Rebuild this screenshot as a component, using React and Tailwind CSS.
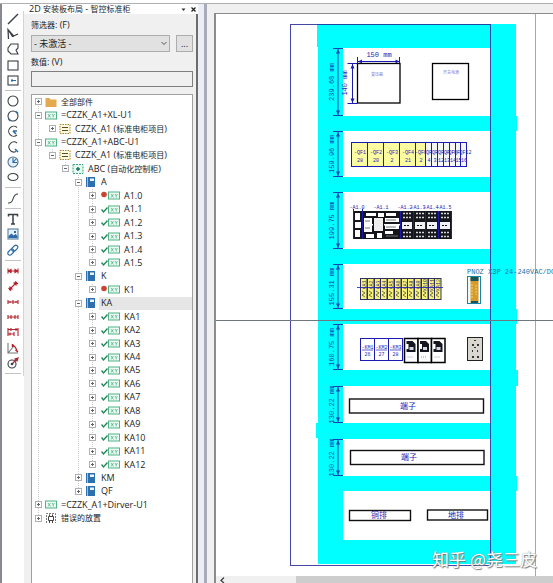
import React from "react";

const SANS = "font-['Open_Sans','Noto_Sans_CJK_SC',sans-serif]";

/* ---------- Toolbar ---------- */

const RED = "#b3242c";
const INK = "#3a3f45";
const BLUE = "#2c6ba8";

const dimEnds = (
  <path d="M2 4.500v5M12 4.500v5M2 7h10M2.500 7l2.500-1.500v3zM11.500 7l-2.500-1.500v3z" fill={RED} stroke={RED} />
);

const TOOL_GROUPS = [
  {
    size: "h-[77px]",
    tools: [
      ["Line", <path d="M2 12L12 2" strokeWidth="1.5" />],
      ["Polyline", <path d="M2.500 12L2 2.500l6 7M2 2.500l4.500 7L12 7" strokeWidth="1.300" />],
      ["Polygon", <path d="M5 2h7v4l-2 2 2 4H5L2 9V6z" />],
      ["Rectangle", <rect x="2" y="3" width="10" height="9" />],
      ["Rectangle via centre", <><rect x="2" y="3" width="10" height="9" /><path d="M5 7.500h5M6 6v3" stroke={BLUE} /></>],
    ],
  },
  {
    size: "h-[92px]",
    tools: [
      ["Circle", <circle cx="7" cy="7" r="5" />],
      ["Circle through three points", <><circle cx="7" cy="7" r="5" /><path d="M10 2.500l2 2M2.500 10l2 2" stroke={BLUE} strokeWidth="1.6" /></>],
      ["Arc via centre", <><path d="M11 3.500A5 5 0 1 0 11 11" /><path d="M7 7h4M7 7l3 3" stroke={BLUE} strokeWidth="1.5" /></>],
      ["Arc through three points", <><path d="M11 3A5 5 0 1 0 10 11.500" /><path d="M9 9l3 3" stroke={BLUE} strokeWidth="1.6" /></>],
      ["Sector", <><circle cx="7" cy="7" r="5" fill="#e6f0f9" stroke="#4a6f94" /><path d="M7 3v4.500h4M7 7.500l3-3.500" stroke={BLUE} /></>],
      ["Ellipse", <ellipse cx="7" cy="7" rx="5" ry="3.500" />],
    ],
  },
  { size: "h-[16px]", tools: [["Spline", <path d="M2 12c7 1 3-9 10-9" />]] },
  {
    size: "h-[47px]",
    tools: [
      ["Text", <path d="M2.500 4.500V2.500h9v2M7 2.500v9.500M5 12h4" strokeWidth="1.5" />],
      ["Image", <><rect x="2" y="2" width="10" height="10" fill="#e4eff8" stroke="#5a7ea3" /><path d="M2.500 11V9l3-2.500 2 2 2-1.500 2 2v2z" fill={BLUE} stroke="none" /><path d="M8 4h2v2H8z" fill={BLUE} stroke="none" /></>],
      ["Hyperlink", <g stroke={BLUE} strokeWidth="1.200" transform="rotate(-45 7 7)"><rect x="0.500" y="5" width="7" height="4" rx="2" /><rect x="6" y="5" width="7" height="4" rx="2" /></g>],
    ],
  },
  {
    size: "h-[108px]",
    tools: [
      ["Linear dimension", dimEnds],
      ["Aligned dimension", <path d="M3.500 10.500l7-7M2.500 9l2.500 3M9 2.500l3 2.500M3.500 10.500l.5-2.500 2 2zM10.500 3.500l-.5 2.500-2-2z" fill={RED} stroke={RED} />],
      ["Continued dimension", <path d="M2 5v4M12 5v4M7 5v4M2 7h10M4 6v2M10 6v2" stroke={RED} />],
      ["Incremental dimension", <path d="M2 5v4M12 5v4M5 5v4M9 5v4M2 7h10" stroke={RED} />],
      ["Baseline dimension", <path d="M2 3v8M12 3v8M2 4.500h10M2 9h6M8 7v4M5 3v3M10 3v3M4 7.500v3" stroke={RED} />],
      ["Angle dimension", <><path d="M2 2v10h10M2 12l6-7" stroke="#777" /><path d="M7 4q3 2 4 6M6.500 3v3M9.500 9l2.500 2" stroke={RED} strokeWidth="1.500" /></>],
      ["Radius dimension", <><circle cx="6" cy="8" r="4" /><path d="M6 8l6-6M9 3l3-1-1 3z" stroke={RED} strokeWidth="1.200" /><circle cx="6" cy="8" r="0.800" fill={INK} /></>],
    ],
  },
];

function Toolbar() {
  return (
    <nav aria-label="Drawing tools" className="flex w-6 shrink-0 flex-col border-l-2 border-[#85888f] bg-white pt-[7px]">
      {TOOL_GROUPS.map((g, i) => (
        <div key={i} className="flex flex-col items-center border-r border-[#d4d4d8]">
          <div className={`grid auto-rows-fr ${g.size}`}>
            {g.tools.map(([name, art]) => (
              <button key={name} type="button" aria-label={name} className="flex min-h-0 items-center justify-center">
                <svg width="14" height="14" viewBox="0 0 14 14" fill="none" stroke={INK} strokeWidth="1.100" className="shrink-0">
                  {art}
                </svg>
              </button>
            ))}
          </div>
          <div className="my-[2px] h-px w-4 bg-[#c4c4c8]" />
        </div>
      ))}
    </nav>
  );
}

/* ---------- Tree ---------- */

const leaf = (t, mark) => [4, "+", mark, t];
const TREE = [
  [0, "+", "folder", "", "全部部件"],
  [0, "-", "xy", "=CZZK_A1+XL-U1"],
  [1, "+", "layout", "CZZK_A1 ", "标准电柜项目"],
  [0, "-", "xy", "=CZZK_A1+ABC-U1"],
  [1, "-", "layout", "CZZK_A1 ", "标准电柜项目"],
  [2, "-", "place", "ABC ", "自动化控制柜"],
  [3, "-", "book", "A"],
  leaf("A1.0", "dot"),
  ...[1, 2, 3, 4, 5].map((n) => leaf(`A1.${n}`, "check")),
  [3, "-", "book", "K"],
  leaf("K1", "dot"),
  [3, "-", "book", "KA"],
  ...[1, 2, 3, 4, 5, 6, 7, 8, 9, 10, 11, 12].map((n) => leaf(`KA${n}`, "check")),
  [3, "+", "book", "KM"],
  [3, "+", "book", "QF"],
  [0, "+", "xy", "=CZZK_A1+Dirver-U1"],
  [0, "+", "wrong", "", "错误的放置"],
];

const INDENT = ["pl-[3px]", "pl-[17px]", "pl-[30px]", "pl-[43px]", "pl-[57px]"];

function XY() {
  return (
    <svg width="12" height="9" viewBox="0 0 12 9" className="shrink-0" fill="none" stroke="#4fb386" aria-hidden="true">
      <rect x="0.500" y="1" width="11" height="7" fill="#edfaf3" />
      <path d="M3 3l2.500 3.500M5.500 3L3 6.500M7 3l1.200 1.700L9.500 3M8.200 4.500v2" strokeWidth="0.800" />
    </svg>
  );
}

const GLYPHS = {
  folder: <path d="M0.500 2h4l1 1.500h6V11h-11z" fill="#e5a950" />,
  layout: (
    <>
      <rect x="1" y="1.500" width="10" height="9" fill="#fffbe0" stroke="#a8842c" strokeDasharray="1.500 1" />
      <path d="M3 4.500h6M3 7.500h6" stroke="#5b4c23" />
    </>
  ),
  place: (
    <>
      <rect x="1" y="1.500" width="10" height="9" fill="#e3faf2" stroke="#3aa583" strokeDasharray="2 1" />
      <path d="M6 4v4M4 6h4" stroke="#1d6d5c" strokeWidth="1.400" />
    </>
  ),
  book: (
    <>
      <rect x="1" y="1" width="9" height="10" fill="#2e6fae" />
      <path d="M2.500 1v10" stroke="#9cc3e6" />
      <rect x="5" y="2.500" width="4" height="2.500" fill="#e9f3fb" />
    </>
  ),
  wrong: (
    <>
      <path d="M1.500 11V1.500h9V11" fill="none" stroke="#777" strokeDasharray="2 1" />
      <path d="M3.500 4.500h5v4h-5zM4.500 2.500v2M7.500 2.500v2M4.500 9v2M7.500 9v2" fill="none" stroke="#444" />
    </>
  ),
};

function RowIcon({ kind }) {
  if (kind === "xy") return <XY />;
  if (kind === "dot" || kind === "check") {
    return (
      <span className="flex items-center pl-[2px]">
        <svg width="7" height="9" viewBox="0 0 7 9" className="shrink-0" aria-hidden="true">
          {kind === "dot" ? (
            <circle cx="3" cy="3.500" r="2.800" fill="#cb4433" />
          ) : (
            <path d="M0.500 4.500L2.500 7 6.500 2.500" fill="none" stroke="#23865b" strokeWidth="1.400" />
          )}
        </svg>
        <XY />
      </span>
    );
  }
  return (
    <svg width="12" height="12" viewBox="0 0 12 12" className="shrink-0" aria-hidden="true">
      {GLYPHS[kind]}
    </svg>
  );
}

function TreeRow({ row }) {
  const [level, state, kind, latin, cjk] = row;
  const selected = latin === "KA";
  return (
    <li role="treeitem" aria-selected={selected} aria-level={level + 1} className={`flex min-h-0 items-center whitespace-nowrap ${INDENT[level]}`}>
      <button type="button" aria-label={state === "+" ? "Expand" : "Collapse"} className="mr-[3px] shrink-0">
        <svg width="7" height="7" viewBox="0 0 7 7" className="block">
          <rect x="0.500" y="0.500" width="6" height="6" fill="#fff" stroke="#b0b0b0" />
          <path d={state === "+" ? "M2 3.500h3M3.500 2v3" : "M2 3.500h3"} stroke="#5f6670" />
        </svg>
      </button>
      <RowIcon kind={kind} />
      <span className={`ml-[2px] flex h-full items-center whitespace-pre pl-[2px] text-[9px] leading-3 ${selected ? "flex-1 bg-[#e6e6e6]" : ""}`}>
        {latin}
        {cjk && latin && "("}
        {cjk && <span className="text-[8px]">{cjk}</span>}
        {cjk && latin && ")"}
      </span>
    </li>
  );
}

function Tree() {
  return (
    <div className="relative mr-[3px] min-h-0 flex-1 overflow-hidden border border-b-0 border-[#a0a0a0] bg-white">
      <svg className="absolute left-0 top-0" width="70" height="430" fill="none" stroke="#c9c9c9" strokeDasharray="1 1" aria-hidden="true">
        <path d="M6.500 7v416M20.500 54v8M33.500 67v8M46.500 80v314M60.500 94v74M60.500 189v6M60.500 215v154" />
      </svg>
      <ul role="tree" aria-label="安装板布局" className="relative grid h-[430px] auto-rows-fr">
        {TREE.map((row, i) => (
          <TreeRow key={i} row={row} />
        ))}
      </ul>
    </div>
  );
}

function Navigator() {
  return (
    <section className="flex w-[174px] shrink-0 flex-col border-r-2 border-[#6d6d6d] bg-[#f0f0f0] text-[9px] leading-3 text-[#1c1c1c]">
      <header className="-mr-[2px] flex h-[10px] shrink-0 items-center bg-white pl-[5px]">
        <h1 className="flex-1 whitespace-nowrap">
          2D <span className="text-[8px]">安装板布局</span> - <span className="text-[8px]">智控标准柜</span>
        </h1>
        <button type="button" aria-label="Menu" className="mr-[5px]">
          <svg width="5" height="5" viewBox="0 0 5 5"><path d="M0.500 1.500h4L2.500 4z" fill="#333" /></svg>
        </button>
        <button type="button" aria-label="Close" className="mr-[2px]">
          <svg width="5" height="5" viewBox="0 0 5 5"><path d="M0.500 0.500l4 4M4.500 0.500l-4 4" stroke="#222" strokeWidth="1.300" /></svg>
        </button>
      </header>
      <div className="flex min-h-0 flex-1 flex-col pl-[7px] pt-[5px]">
        <label htmlFor="filter"><span className="text-[8px]">筛选器</span>: (F)</label>
        <div className="mr-[3px] mt-1 flex gap-[6px]">
          <div className="relative flex-1">
            <select id="filter" className="h-[17px] w-full appearance-none border border-[#adadad] bg-[#e1e1e1] pl-[2px] text-[9px] leading-3">
              <option>- 未激活 -</option>
            </select>
            <svg className="pointer-events-none absolute right-[3px] top-[6px]" width="6" height="5" viewBox="0 0 6 5" fill="none" stroke="#555"><path d="M0.500 1L3 3.500 5.500 1" /></svg>
          </div>
          <button type="button" className="h-[17px] w-[17px] border border-[#adadad] bg-[#e1e1e1] leading-3">...</button>
        </div>
        <label htmlFor="value" className="mt-1"><span className="text-[8px]">数值</span>: (V)</label>
        <input id="value" className="mb-[7px] mr-[3px] mt-[3px] h-[16px] shrink-0 border border-[#7f7f7f] bg-[#f0f0f0] px-1" />
        <Tree />
      </div>
    </section>
  );
}

/* ---------- Mounting panel drawing ---------- */

const NAVY = "#1b1bb4";
const SLOTS = [
  [48, 116, "239.68 mm"],
  [131, 177, "159.96 mm"],
  [192, 249, "199.75 mm"],
  [264, 309, "155.31 mm"],
  [324, 370, "160.75 mm"],
  [386, 423, "130.22 mm"],
  [439, 476, "130.22 mm"],
  [491, 540, null],
];

function Label({ x, y, size = 7, fill = NAVY, anchor = "middle", turn = false, children }) {
  return (
    <text
      x={x}
      y={y}
      fontSize={size}
      fill={fill}
      textAnchor={anchor}
      transform={turn ? `rotate(-90 ${x} ${y})` : undefined}
      className="font-['Liberation_Mono','Noto_Sans_CJK_SC',monospace]"
    >
      {children}
    </text>
  );
}

function VDim({ x, y1, y2, color }) {
  return (
    <g stroke={color} fill={color}>
      <path d={`M${x} ${y1}V${y2}M${x - 5} ${y1 + 0.5}h10M${x - 5} ${y2 - 0.5}h10`} fill="none" />
      <path d={`M${x} ${y1 + 1}l-2 4.500h4zM${x} ${y2 - 1}l-2-4.500h4z`} stroke="none" />
    </g>
  );
}

const QF_EDGES = [351, 367, 383, 399, 415, 425, 431, 437, 443, 449, 455, 460, 466];
const QF_NUMBERS = ["28", "20", "2", "21", "2", "4", "3", "12", "13", "14", "15", "16"];

function Breakers() {
  return (
    <g>
      {QF_NUMBERS.map((n, i) => {
        const x = QF_EDGES[i];
        const w = QF_EDGES[i + 1] - x;
        return (
          <g key={i}>
            <rect x={x + 0.5} y="142.500" width={w} height="24" fill={i < 5 ? "#fbfba0" : "#f5f5f4"} stroke={NAVY} />
            <Label x={x + w / 2 + 1} y={154} size={5}>{`-QF${i + 1}`}</Label>
            <Label x={x + w / 2 + 1} y={162} size={5}>{n}</Label>
          </g>
        );
      })}
    </g>
  );
}

function Plc() {
  return (
    <g>
      <rect x="353" y="211" width="99" height="28" fill="#15151c" />
      <path d="M355 213h5v7h-5zM355 230h5v7h-5zM355 222h6v6h-6zM366 213h10v3h-10zM378 213h6v5h-6zM386 213h10v3h-10zM364 218h8v14h-8zM385 218h14v4h-14zM385 225h14v4h-14zM366 234h8v4h-8zM385 231h8v3h-8zM377 233h5v5h-5z" fill="#fff" />
      <path d="M364 224h36v1.500h-36z" fill="#fff" />
      <path d="M386 220h10M386 227h10M365 221h5M365 228h5M386 236h12" stroke="#777" />
      <rect x="373.500" y="217.500" width="10" height="14" fill="#eee" stroke="#111" />
      {[402, 415, 427, 440].map((x) => (
        <g key={x}>
          <path d={`M${x} 222h10v7h-10z`} fill="#f2f2f6" />
          <path d={`M${x + 2} 225.500h6`} stroke="#111" strokeDasharray="2 1" />
          <path d={`M${x + 1} 213.500h8M${x + 1} 217.500h8M${x + 1} 232.500h8M${x + 1} 236.500h8`} stroke="#d5d5d5" strokeWidth="1.500" strokeDasharray="2 1" />
          <path d={`M${x - 1.5} 211v28`} stroke={NAVY} />
        </g>
      ))}
      <path d="M353.500 209v30M362.500 209v30M451.500 211v28" stroke={NAVY} />
      {[357, 381, 405, 418, 431, 444].map((x, i) => (
        <Label key={x} x={x} y={209} size={5}>{`-A1.${i}`}</Label>
      ))}
    </g>
  );
}

function Relays() {
  return (
    <g>
      {Array.from({ length: 12 }, (_, i) => {
        const x = 360 + Math.round(i * 6.75);
        return (
          <g key={i}>
            <rect x={x + 0.5} y="278.500" width="6.500" height="21" fill="#f7f27a" stroke="#30305c" />
            <Label x={x + 6} y={285} size={5} turn fill="#30306a">{`KA${i + 1}`}</Label>
            <path d={`M${x + 2} 291l3 2-3 2 3 2`} stroke="#55542a" strokeWidth="0.800" fill="none" />
          </g>
        );
      })}
      <path d="M357 287.500h86" stroke={NAVY} strokeWidth="0.800" />
    </g>
  );
}

function LowerDevices() {
  return (
    <g>
      {[26, 27, 28].map((n, i) => (
        <g key={n}>
          <rect x={360.5 + i * 14} y="338.500" width="14" height="22" fill="#fff" stroke={NAVY} />
          <Label x={367.5 + i * 14} y={349} size={5}>{`-KM${i + 1}`}</Label>
          <path d={`M${362 + i * 14} 350h11`} stroke={NAVY} strokeWidth="0.700" />
          <Label x={367.5 + i * 14} y={356} size={5}>{n}</Label>
        </g>
      ))}
      {[404.5, 418, 431.5].map((x) => (
        <g key={x}>
          <rect x={x} y="338.500" width="13.500" height="24" fill="#fff" stroke="#000" strokeWidth="1.500" />
          <path d={`M${x + 2} 341h6l3 3v8h-9v-3h2v-5h-2z`} fill="#16161e" />
          <rect x={x + 5} y="347" width="4" height="3" fill="#d6d6e4" />
          <path d={`M${x + 3} 357h6`} stroke="#999" strokeDasharray="1 1" />
        </g>
      ))}
      <rect x="467.500" y="337.500" width="15" height="23" fill="#d9d7d0" stroke="#222" />
      <g fill="#333">
        <path d="M474 340h2v1h-2zM472 344h2v2h-2zM477 344h2v2h-2zM474 347h2v1h-2zM472 350h1v2h-1zM477 350h1v2h-1zM472 356h2v2h-2zM477 356h2v2h-2z" />
      </g>
    </g>
  );
}

function PanelDrawing() {
  return (
    <svg width="337" height="562" viewBox="216 14 337 562" className="block max-w-none" role="img" aria-label="安装板">
      <path d="M535.500 14v562" stroke="#a8a8a8" />
      <rect x="318" y="24" width="198" height="540" rx="1" fill="#0ff" />
      <path d="M317 24h60v23h-60zM440 116h77v15h-77zM440 309h77v15h-77zM440 370h78v16h-78zM316 423h60v15h-60zM440 476h77v15h-77z" fill="#0ff" />
      {SLOTS.map(([y1, y2, text], i) => (
        <g key={i}>
          <rect x="343" y={y1} width="148" height={y2 - y1} fill="#fff" />
          {text && <VDim x={338} y1={y1} y2={y2} color="#1245b8" />}
          {text && <Label x={334} y={(y1 + y2) / 2} turn fill="#1245b8">{text}</Label>}
        </g>
      ))}
      <rect x="290.500" y="24.500" width="200" height="541" fill="none" stroke="#26269a" strokeOpacity="0.850" />

      <rect x="357.500" y="63.500" width="42.500" height="39.500" fill="#fff" stroke="#000" strokeWidth="1.300" />
      <Label x={377} y={76} size={4} fill="#7575d6">变压器</Label>
      <path d="M357.500 57v6M399.500 57v6M357 61.500h43" stroke={NAVY} fill="none" />
      <path d="M358 61.500l4-2v4zM399.500 61.500l-4-2v4z" fill={NAVY} />
      <Label x={379} y={57}>150 mm</Label>
      <VDim x={352.5} y1={63} y2={104} color={NAVY} />
      <Label x={347} y={83} turn>140 mm</Label>
      <rect x="432.500" y="63.500" width="36" height="36" fill="#fff" stroke="#000" strokeWidth="1.300" />
      <Label x={451} y={74} size={4} fill="#7575d6">开关电源</Label>

      <Breakers />
      <Plc />
      <Relays />

      <rect x="467.500" y="276.500" width="13" height="27" fill="#eefaff" stroke="#1784a8" />
      <rect x="470.500" y="277" width="8" height="26" fill="#d59b2d" />
      <path d="M470.500 277h8v4h-8zM471 301h7v2h-7z" fill="#1d545c" />
      <path d="M472 284v14M476 285v10" stroke="#f4d37a" strokeDasharray="2 1" />
      <Label x={467} y={274} anchor="start" fill="#1570a4">PNOZ X3P 24-240VAC/DC</Label>

      <LowerDevices />
      <path d="M216 320.500h337" stroke="#6f7780" />

      <g fill="#fff" stroke="#111" strokeWidth="1.400">
        <rect x="349.500" y="399" width="134" height="14" />
        <rect x="350.500" y="450.500" width="133.500" height="14" />
        <rect x="349.500" y="510.500" width="61" height="10" />
        <rect x="427.500" y="510" width="60" height="10" />
      </g>
      <Label x={408} y={409} size={8}>端子</Label>
      <Label x={409} y={460} size={8}>端子</Label>
      <Label x={379} y={518} size={8}>铜排</Label>
      <Label x={456} y={518} size={8}>地排</Label>
    </svg>
  );
}

function Workspace() {
  return (
    <main className="flex min-w-0 flex-1 flex-col border-l-[3px] border-[#a9abb8] bg-[#f0f0f0] pl-[7px] pt-[9px]">
      <div className="relative min-h-0 flex-1 overflow-hidden border-l-2 border-t border-[#8c8c8c] bg-white">
        <PanelDrawing />
        <p className="absolute bottom-[5px] right-4 whitespace-nowrap font-['Noto_Sans_CJK_SC',sans-serif] text-[17px] leading-6 text-white [text-shadow:1px_1px_1px_#777,0_0_1px_#888]">
          知乎 @尧三皮
        </p>
      </div>
      <div className="flex h-[7px] shrink-0 border-l-2 border-[#8c8c8c]">
        <button type="button" aria-label="Scroll left" className="flex w-20 items-center pl-1">
          <svg width="5" height="7" viewBox="0 0 5 7" fill="none" stroke="#444"><path d="M4 1.500L1 4.500 4 7" strokeWidth="1.300" /></svg>
        </button>
        <div className="flex-1 bg-[#cdcdcd]" />
      </div>
    </main>
  );
}

export default function App() {
  return (
    <div className={`flex h-screen flex-col overflow-hidden bg-white ${SANS}`}>
      <div className="h-1 shrink-0 border-b border-[#b0b0b4]" />
      <div className="flex min-h-0 flex-1">
        <Toolbar />
        <Navigator />
        <div className="w-[6px] shrink-0 bg-[#eceef6]" />
        <Workspace />
      </div>
    </div>
  );
}
